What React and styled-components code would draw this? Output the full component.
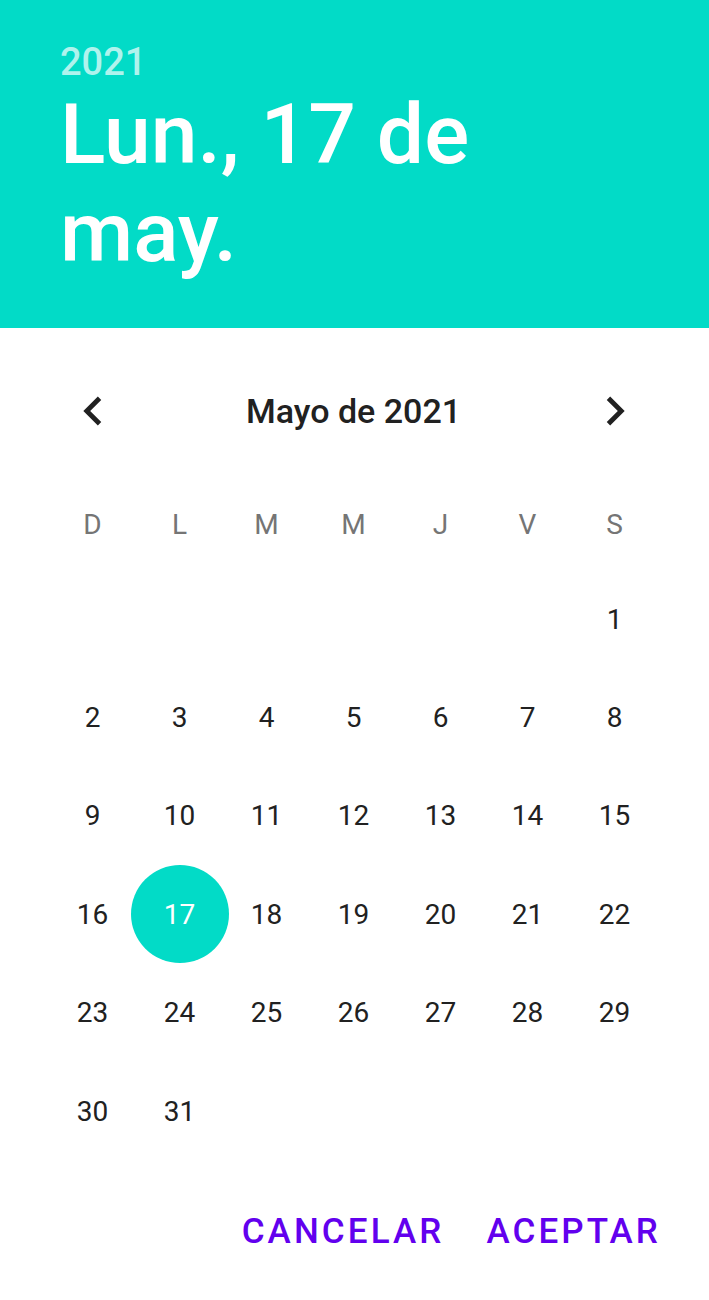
import React from 'react';
import styled, { createGlobalStyle } from 'styled-components';

const GlobalStyle = createGlobalStyle`
  html, body {
    margin: 0;
    padding: 0;
    background: #ffffff;
    font-family: Roboto, "Noto Sans", sans-serif;
  }
`;

const Dialog = styled.div`
  width: 709px;
  height: 1300px;
  background: #ffffff;
  display: flex;
  flex-direction: column;
`;

const Header = styled.header`
  height: 328px;
  box-sizing: border-box;
  background: #02dbc7;
  padding: 38px 60px 0;
  color: #ffffff;
`;

const Year = styled.div`
  font-size: 38px;
  line-height: 48px;
  font-weight: 500;
  color: rgba(255, 255, 255, 0.7);
`;

const Title = styled.h1`
  margin: 0;
  font-size: 84px;
  line-height: 98px;
  font-weight: 500;
  width: 470px;
`;

const Body = styled.div`
  padding: 0 51px 0 49px;
`;

const MonthBar = styled.div`
  height: 166px;
  padding-top: 53px;
  box-sizing: border-box;
  display: grid;
  grid-template-columns: 87px 1fr 87px;
  align-items: start;
`;

const NavButton = styled.button`
  height: 60px;
  border: 0;
  background: none;
  padding: 0;
  display: flex;
  align-items: center;
  justify-content: center;
  color: #212121;
`;

const MonthLabel = styled.div`
  height: 60px;
  display: flex;
  align-items: center;
  justify-content: center;
  font-size: 34px;
  font-weight: 500;
  color: #212121;
`;

const Grid = styled.div`
  display: grid;
  grid-template-columns: repeat(7, 87px);
`;

const WeekDay = styled.div`
  height: 60px;
  display: flex;
  align-items: center;
  justify-content: center;
  font-size: 28px;
  color: #757575;
  margin-bottom: 16px;
`;

const Cell = styled.div`
  height: 98.4px;
  display: flex;
  align-items: center;
  justify-content: center;
`;

const Day = styled.div`
  width: 98px;
  height: 98px;
  flex-shrink: 0;
  border-radius: 50%;
  display: flex;
  align-items: center;
  justify-content: center;
  font-size: 28px;
  color: ${(p) => (p.selected ? '#ffffff' : '#212121')};
  background: ${(p) => (p.selected ? '#02dbc7' : 'transparent')};
`;

const Actions = styled.div`
  display: flex;
  justify-content: flex-end;
  gap: 42px;
  padding-top: 41px;
  margin-right: -3px;
`;

const ActionButton = styled.button`
  border: 0;
  background: none;
  padding: 10px 0;
  font-family: Roboto, sans-serif;
  font-size: 35px;
  font-weight: 500;
  letter-spacing: 3.1px;
  color: #6200ee;
`;

const Chevron = ({ dir }) => (
  <svg width="58" height="58" viewBox="0 0 24 24" fill="currentColor">
    {dir === 'left' ? (
      <path d="M15.41 7.41 14 6l-6 6 6 6 1.41-1.41L10.83 12z" />
    ) : (
      <path d="M10 6 8.59 7.41 13.17 12l-4.58 4.59L10 18l6-6z" />
    )}
  </svg>
);

const weekDays = ['D', 'L', 'M', 'M', 'J', 'V', 'S'];
const days = [...Array(6).fill(null), ...Array.from({ length: 31 }, (_, i) => i + 1)];

const App = () => (
  <>
    <GlobalStyle />
    <Dialog>
      <Header>
        <Year>2021</Year>
        <Title>Lun., 17 de may.</Title>
      </Header>
      <Body>
        <MonthBar>
          <NavButton aria-label="Mes anterior">
            <Chevron dir="left" />
          </NavButton>
          <MonthLabel>Mayo de 2021</MonthLabel>
          <NavButton aria-label="Mes siguiente">
            <Chevron dir="right" />
          </NavButton>
        </MonthBar>
        <Grid>
          {weekDays.map((d, i) => (
            <WeekDay key={i}>{d}</WeekDay>
          ))}
          {days.map((d, i) => (
            <Cell key={i}>{d && <Day selected={d === 17}>{d}</Day>}</Cell>
          ))}
        </Grid>
        <Actions>
          <ActionButton>CANCELAR</ActionButton>
          <ActionButton>ACEPTAR</ActionButton>
        </Actions>
      </Body>
    </Dialog>
  </>
);

export default App;
